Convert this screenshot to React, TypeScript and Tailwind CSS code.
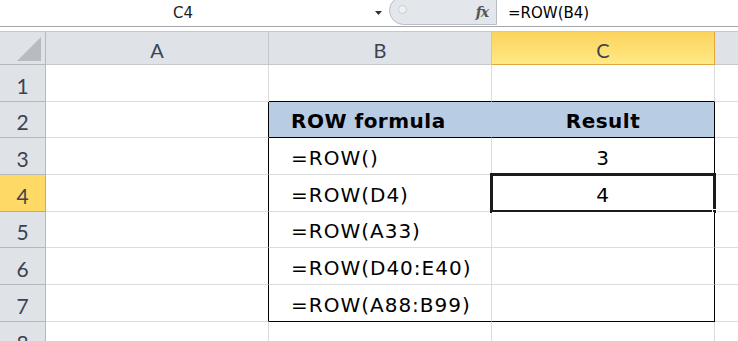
import React from 'react';

const hdrFont = "font-['Lato','Noto_Sans',sans-serif]";
const cellFont = "font-['DejaVu_Sans','Noto_Sans',sans-serif]";

const rows = [
  { n: 1, h: 'h-[37px]' },
  { n: 2, h: 'h-[36px]' },
  { n: 3, h: 'h-[37px]' },
  { n: 4, h: 'h-[37px]' },
  { n: 5, h: 'h-[36px]' },
  { n: 6, h: 'h-[37px]' },
  { n: 7, h: 'h-[37px]' },
  { n: 8, h: 'h-[37px]' },
];

const formulas: Record<number, string> = {
  3: '=ROW()',
  4: '=ROW(D4)',
  5: '=ROW(A33)',
  6: '=ROW(D40:E40)',
  7: '=ROW(A88:B99)',
};

const results: Record<number, string> = { 3: '3', 4: '4' };

const FormulaBar = () => (
  <div className="flex h-[27px] bg-white border-b border-[#a3a7ac]">
    <div className={`w-[366px] flex items-center justify-center text-[15px] text-[#222] ${cellFont}`}>C4</div>
    <div className="w-[23px] flex items-center justify-start pl-[9px]">
      <svg width="7" height="4" viewBox="0 0 7 4">
        <path d="M0 0h7L3.5 4z" fill="#333" />
      </svg>
    </div>
    <div className="w-[108px] h-[29px] relative flex items-center justify-end pr-[8px] pt-[3px] bg-[#e3e6ea] border border-[#b9bec4] rounded-l-[15px] -mt-[4px]">
      <div className="absolute left-[8px] top-[8px] w-[9px] h-[9px] rounded-full border border-[#c9cdd2] bg-[#eef0f2]" />
      <span className="font-['DejaVu_Serif',serif] italic font-bold text-[14px] text-[#555] tracking-[-1px]">fx</span>
    </div>
    <div className={`flex-1 flex items-center pl-[11px] text-[15px] text-black ${cellFont}`}>=ROW(B4)</div>
  </div>
);

const Spacer = () => <div className="h-[5px] bg-white border-b border-[#c3c8ce]" />;

const ColumnHeaders = () => (
  <div className={`flex h-[33px] ${hdrFont} text-[20px] leading-none text-[#3b4350]`}>
    <div className="w-[46px] relative bg-[#dfe3e8] border-r border-b border-[#b4b9bf]">
      <svg className="absolute right-[4px] bottom-[3px]" width="24" height="24" viewBox="0 0 24 24">
        <path d="M24 0V24H0z" fill="#b7bcc2" />
      </svg>
    </div>
    <div className="w-[223px] flex items-end justify-center pb-[4px] bg-[#dfe3e8] border-r border-b border-[#c4c8cd]">A</div>
    <div className="w-[223px] flex items-end justify-center pb-[4px] bg-[#dfe3e8] border-r border-b border-[#c4c8cd]">B</div>
    <div className="w-[223px] flex items-end justify-center pb-[4px] bg-gradient-to-b from-[#fbd35c] to-[#ffe985] border-r border-b border-[#e2a63b]">C</div>
    <div className="flex-1 bg-[#dfe3e8] border-b border-[#c4c8cd]" />
  </div>
);

const Row = ({ n, h }: { n: number; h: string }) => {
  const inTable = n >= 2 && n <= 7;
  const isHead = n === 2;
  const active = n === 4;
  const aRight = inTable ? 'border-r-black' : 'border-r-[#dadcdd]';
  const bottom = n === 1 || n === 2 || n === 7 ? 'border-b-black' : 'border-b-[#dadcdd]';
  const text = isHead ? 'font-bold tracking-[0.5px]' : 'tracking-[1px]';
  return (
    <div className={`flex ${h}`}>
      <div
        className={`w-[46px] flex items-end justify-center pb-[5px] ${hdrFont} text-[21px] leading-none text-[#3b4350] border-r border-b ${
          active ? 'bg-[#ffd966] border-[#e2a63b]' : 'bg-[#dfe3e8] border-[#b4b9bf]'
        }`}
      >
        {n}
      </div>
      <div className={`w-[223px] bg-white border-r border-b border-b-[#dadcdd] ${aRight}`} />
      <div
        className={`w-[223px] flex items-end pl-[22px] pb-[6px] ${cellFont} text-[20px] leading-none text-black border-r border-b ${bottom} ${text} ${
          isHead ? 'bg-[#b8cce4] border-r-[#b8cce4]' : 'bg-white border-r-[#dadcdd]'
        }`}
      >
        {isHead ? 'ROW formula' : formulas[n] ?? ''}
      </div>
      <div
        className={`relative w-[223px] flex items-end justify-center pb-[6px] ${cellFont} text-[20px] leading-none text-black border-r border-b ${bottom} ${text} ${
          inTable ? 'border-r-black' : 'border-r-[#dadcdd]'
        } ${isHead ? 'bg-[#b8cce4]' : 'bg-white'}`}
      >
        {isHead ? 'Result' : results[n] ?? ''}
        {active && (
          <div className="absolute -left-[2px] -top-[2px] -right-[2px] -bottom-[2px] border-[3px] border-[#1b1b1b]">
            <div className="absolute -right-[4px] -bottom-[4px] w-[5px] h-[5px] bg-[#1b1b1b] border border-white" />
          </div>
        )}
      </div>
      <div className="flex-1 bg-white border-b border-[#dadcdd]" />
    </div>
  );
};

export default function App() {
  return (
    <div className="w-[738px] h-[341px] overflow-hidden bg-white">
      <FormulaBar />
      <Spacer />
      <ColumnHeaders />
      {rows.map((r) => (
        <Row key={r.n} n={r.n} h={r.h} />
      ))}
    </div>
  );
}
